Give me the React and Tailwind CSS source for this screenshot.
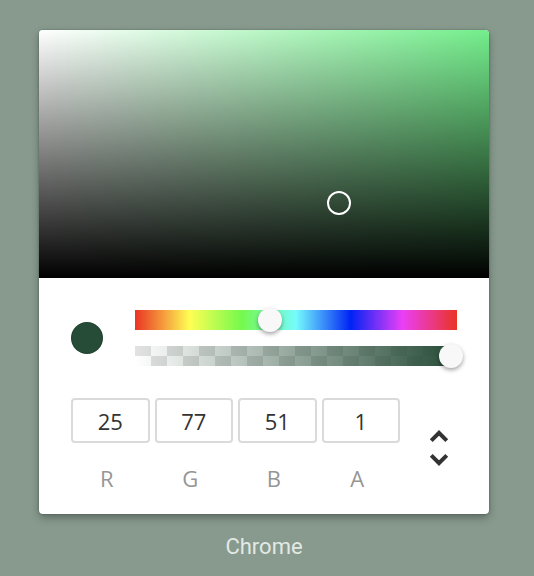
import React from "react";

// rgba readout for the current colour
const fields = [
  { label: "R", value: "25" },
  { label: "G", value: "77" },
  { label: "B", value: "51" },
  { label: "A", value: "1" },
];

const Handle = ({ className }) => (
  <div
    className={`absolute top-[-2px] size-6 rounded-full bg-[#f8f8f8] shadow-[0_2px_4px_rgba(0,0,0,0.37)] ${className}`}
  />
);

const ChromePicker = () => {
  return (
    <div className="w-[450px] overflow-hidden rounded-[4px] bg-white shadow-[0_0_2px_rgba(0,0,0,0.3),0_4px_8px_rgba(0,0,0,0.3)]">
      {/* Saturation / value square */}
      <div className="relative h-[248px] bg-[#74ee8c]">
        <div className="absolute inset-0 bg-linear-to-r from-white to-white/0" />
        <div className="absolute inset-0 bg-linear-to-t from-black to-black/0" />
        <div className="absolute left-[288px] top-[161px] size-6 rounded-full border-2 border-white shadow-[inset_0_0_1px_rgba(0,0,0,0.4)]" />
      </div>

      <div className="px-8 pt-8 pb-6">
        <div className="flex items-center">
          <div className="size-8 shrink-0 rounded-full bg-[#264b37] shadow-[inset_0_0_0_1px_rgba(0,0,0,0.1)]" />

          <div className="ml-8 flex flex-1 flex-col gap-4">
            {/* Hue */}
            <div className="relative h-5 bg-[linear-gradient(to_right,#ea3323_0%,#fffe54_17%,#75f94d_33%,#75fbfd_50%,#0023f5_67%,#ea3ff7_83%,#ea3323_100%)]">
              <Handle className="left-[123px]" />
            </div>

            {/* Alpha */}
            <div className="relative h-5 bg-[conic-gradient(#fff_25%,#e2e2e2_0_50%,#fff_0_75%,#e2e2e2_0)] bg-[length:32px_20px]">
              <div className="absolute inset-0 bg-linear-to-r from-[#264b37]/0 to-[#264b37]" />
              <Handle className="left-[304px]" />
            </div>
          </div>
        </div>

        <div className="mt-8 flex">
          <div className="flex w-[329px] shrink-0 gap-[5px]">
            {fields.map((f) => (
              <div key={f.label} className="flex min-w-0 flex-1 flex-col">
                <input
                  readOnly
                  value={f.value}
                  className="h-[45px] w-full min-w-0 rounded-[4px] border-2 border-[#dadada] text-center font-['Open_Sans',sans-serif] text-[22px] text-[#333] outline-none"
                />
                <span className="mt-[23px] pr-[7px] text-center font-['Open_Sans',sans-serif] text-[22px] font-medium leading-[24px] text-[#969696]">
                  {f.label}
                </span>
              </div>
            ))}
          </div>

          <div className="min-w-0 flex-1 pl-[15px] pt-[26px]">
            <svg width="48" height="48" viewBox="0 0 24 24" className="overflow-visible">
              <path
                fill="#333"
                d="M12,18.17L8.83,15L7.42,16.41L12,21L16.59,16.41L15.17,15M12,5.83L15.17,9L16.58,7.59L12,3L7.41,7.59L8.83,9L12,5.83Z"
              />
            </svg>
          </div>
        </div>
      </div>
    </div>
  );
};

const App = () => {
  return (
    <div className="min-h-screen w-full bg-[#889a8e] pl-[39px] pt-[30px]">
      <div className="flex w-[450px] flex-col items-center">
        <ChromePicker />
        <div className="mt-[20px] font-['Roboto',sans-serif] text-[22px] leading-[26px] text-[#e2e9e4]">
          Chrome
        </div>
      </div>
    </div>
  );
};

export default App;
